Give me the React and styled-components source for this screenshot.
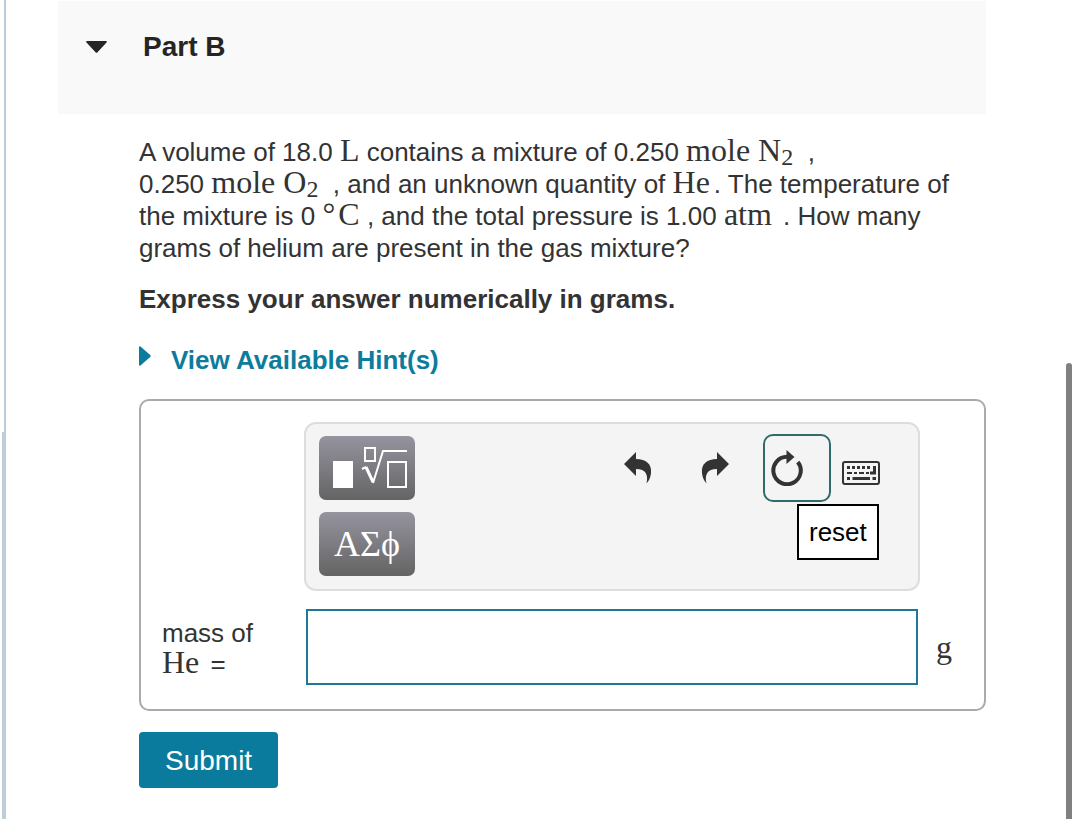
import React, { useState } from 'react'
import styled, { createGlobalStyle } from 'styled-components'

const GlobalStyle = createGlobalStyle`
  * {
    box-sizing: border-box;
  }
  body {
    margin: 0;
    background-color: #fff;
    color: #333;
    font-family: "Liberation Sans", Arial, sans-serif;
    font-size: 26px;
    line-height: 32px;
  }
  button, input {
    font: inherit;
    color: inherit;
  }
`

const Page = styled.div`
  display: flex;
  align-items: stretch;
  min-height: 100vh;
`
const Rail = styled.div`
  width: 6px;
  flex: none;
  display: flex;
  flex-direction: column;
  align-items: flex-end;
`
const RailTop = styled.div`
  width: 2px;
  height: 432px;
  background-color: #bccbdc;
`
const RailBottom = styled.div`
  width: 4px;
  flex: 1;
  background-color: #bfcdd6;
`
const Main = styled.main`
  flex: 1;
  min-width: 0;
  padding: 1px 80px 31px 52px;
`
const ScrollTrack = styled.div`
  width: 12px;
  flex: none;
  display: flex;
  padding: 363px 6px 0 0;
`
const ScrollThumb = styled.div`
  flex: 1;
  border-radius: 3px 3px 0 0;
  background-color: #808080;
`

const PartHeader = styled.header`
  height: 113px;
  padding: 30px 28px;
  background-color: #f9f9f9;
`
const PartToggle = styled.button`
  display: flex;
  align-items: center;
  gap: 36px;
  padding: 0;
  border: 0;
  background: none;
  color: #252525;
  font-size: 28px;
  font-weight: bold;
  cursor: pointer;
`
const Body = styled.div`
  padding: 22px 0 0 81px;
`
const Question = styled.p`
  margin: 0;
`
const Instruction = styled.p`
  margin: 19px 0 0;
  font-weight: bold;
`
const Roman = styled.span`
  margin-right: ${props => (props.$spaced ? 4 : 0)}px;
  font-family: "Liberation Serif", "Times New Roman", serif;
  font-size: 32px;
  line-height: 0;
`
const Sub = styled.sub`
  font-size: 24px;
  line-height: 0;
  vertical-align: -4px;
`
const Degree = styled.span`
  margin-right: 3px;
`
const NoWrap = styled.span`
  white-space: nowrap;
`
const Hints = styled.button`
  display: flex;
  align-items: center;
  gap: 20px;
  margin-top: 29px;
  padding: 0;
  border: 0;
  background: none;
  color: #0d7c9c;
  font-weight: bold;
  cursor: pointer;

  svg {
    margin-bottom: 8px;
  }
`

const AnswerBox = styled.section`
  display: grid;
  grid-template-columns: 143px minmax(0, 1fr) 45px;
  row-gap: 18px;
  margin-top: 23px;
  padding: 21px 19px 24px 21px;
  border: 2px solid #aaa;
  border-radius: 10px;
`
const Toolbar = styled.div`
  grid-column: 2;
  display: flex;
  align-items: flex-start;
  justify-content: space-between;
  height: 169px;
  margin-left: -1px;
  padding: 10px 36px 0 13px;
  border: 2px solid #ddd;
  border-radius: 12px;
  background-color: #f4f4f4;
`
const Palettes = styled.div`
  display: flex;
  flex-direction: column;
  gap: 12px;
  padding-top: 2px;
`
const PaletteButton = styled.button`
  display: flex;
  align-items: center;
  justify-content: center;
  width: 96px;
  height: 64px;
  padding: 0;
  border: 0;
  border-radius: 7px;
  background: linear-gradient(#95949f, #646464);
  color: #fff;
  font-family: "Liberation Serif", "Times New Roman", serif;
  font-size: 36px;
  cursor: pointer;
`
const Tools = styled.div`
  display: flex;
  align-items: center;
`
const ToolButton = styled.button`
  position: relative;
  display: flex;
  align-items: center;
  width: ${props => props.$width}px;
  height: 68px;
  padding: ${props => props.$drop || 0}px 0 0 ${props => props.$inset || 0}px;
  border: 2px solid ${props => (props.$active ? '#2f6b6b' : 'transparent')};
  border-radius: 10px;
  background: none;
  cursor: pointer;
`
const Tooltip = styled.span`
  position: absolute;
  top: 68px;
  left: 32px;
  padding: 10px;
  border: 2px solid #000;
  background-color: #fff;
  color: #000;
`
const AnswerLabel = styled.label`
  grid-column: 1;
  align-self: center;
  padding-top: 4px;
  line-height: 31px;
`
const AnswerField = styled.div`
  padding: 0 2px 0 1px;
`
const AnswerInput = styled.input`
  display: block;
  width: 100%;
  height: 76px;
  padding: 0 16px;
  border: 2px solid #1f7896;
  border-radius: 0;
  background-color: #fff;
  outline: none;
`
const Unit = styled.span`
  align-self: center;
  padding: 4px 0 0 16px;
`
const SubmitButton = styled.button`
  height: 56px;
  margin-top: 21px;
  padding: 1px 26px 0;
  border: 0;
  border-radius: 4px;
  background-color: #0b7b9d;
  color: #fff;
  font-size: 28px;
  cursor: pointer;
`

const CaretDown = () => (
  <svg width="21" height="12" viewBox="0 0 21 12" aria-hidden="true">
    <path d="M1 0H20Q21.500 .5 20.500 1.500L11.500 11.200Q10.500 12.300 9.500 11.200L.5 1.500Q-.5 .5 1 0Z" fill="#252525" />
  </svg>
)

const CaretRight = () => (
  <svg width="12" height="20" viewBox="0 0 12 20" aria-hidden="true">
    <path d="M0 1Q.4-.4 1.500.6L11.200 9Q12.200 10 11.200 11L1.500 19.400Q.4 20.400 0 19Z" fill="#0d7c9c" />
  </svg>
)

const TemplateIcon = () => (
  <svg width="96" height="64" viewBox="0 0 96 64" fill="none" stroke="#fff" aria-hidden="true">
    <rect x="14" y="25" width="20" height="27" fill="#fff" stroke="none" />
    <rect x="46" y="12" width="10" height="13" strokeWidth="2" />
    <path d="M43 33L47 31" strokeWidth="2" />
    <path d="M47 31L54 46" strokeWidth="3" />
    <path d="M54 47L64 15H88" strokeWidth="2" />
    <rect x="69" y="26" width="18" height="25" strokeWidth="2" />
  </svg>
)

const ArrowIcon = ({ flip }) => (
  <svg width="28" height="32" viewBox="0 0 28 32" aria-hidden="true">
    <path
      transform={flip ? 'translate(28 0) scale(-1 1)' : undefined}
      d="M0 12L12 0V7C22 7 28 12 27 21Q26.500 27 22.500 31.500C24.500 23 22 17 12 17V24Z"
      fill="#333"
    />
  </svg>
)

const ResetIcon = () => (
  <svg width="32" height="36" viewBox="0 0 32 36" aria-hidden="true">
    <path d="M16 6.800A13.700 13.700 0 1 0 26.800 12" fill="none" stroke="#333" strokeWidth="4" />
    <path d="M15.500 0L23.500 7L15.500 14Z" fill="#333" />
  </svg>
)

const KeyboardIcon = () => (
  <svg width="38" height="24" viewBox="0 0 38 24" fill="none" stroke="#333" aria-hidden="true">
    <rect x="1" y="1" width="36" height="22" rx="2" strokeWidth="2" />
    <path d="M5 6.500H29" strokeWidth="3" strokeDasharray="3 2" />
    <path d="M5 12H27" strokeWidth="2" strokeDasharray="5 2 3 2" />
    <path d="M32.500 5V13.500M28 12H34" strokeWidth="3" />
    <path d="M5 17.500H8M10.500 17.500H28M30.500 17.500H34" strokeWidth="3" />
  </svg>
)

export default function App() {
  const [answer, setAnswer] = useState('')

  return (
    <Page>
      <GlobalStyle />
      <Rail>
        <RailTop />
        <RailBottom />
      </Rail>
      <Main>
        <PartHeader>
          <PartToggle type="button" aria-expanded="true">
            <CaretDown />
            Part B
          </PartToggle>
        </PartHeader>
        <Body>
          <Question>
            A volume of 18.0 <Roman>L</Roman> contains a mixture of{' '}
            <NoWrap>0.250 <Roman>mole N<Sub>2</Sub></Roman>&nbsp; ,</NoWrap>{' '}
            <NoWrap>0.250 <Roman>mole O<Sub>2</Sub></Roman>&nbsp; ,</NoWrap>{' '}
            and an unknown quantity of <Roman $spaced>He</Roman>. The temperature of
            the mixture is <NoWrap>0 <Roman><Degree>°</Degree>C</Roman> ,</NoWrap>{' '}
            and the total pressure is <NoWrap>1.00 <Roman $spaced>atm</Roman> .</NoWrap>{' '}
            How many grams of helium are present in the gas mixture?
          </Question>
          <Instruction>Express your answer numerically in grams.</Instruction>
          <Hints type="button" aria-expanded="false">
            <CaretRight />
            View Available Hint(s)
          </Hints>

          <AnswerBox>
            <Toolbar role="toolbar">
              <Palettes>
                <PaletteButton type="button" aria-label="templates">
                  <TemplateIcon />
                </PaletteButton>
                <PaletteButton type="button">ΑΣϕ</PaletteButton>
              </Palettes>
              <Tools>
                <ToolButton type="button" aria-label="undo" $width={77}>
                  <ArrowIcon />
                </ToolButton>
                <ToolButton type="button" aria-label="redo" $width={64}>
                  <ArrowIcon flip />
                </ToolButton>
                <ToolButton type="button" $width={68} $inset={6} $active onClick={() => setAnswer('')}>
                  <ResetIcon />
                  <Tooltip role="tooltip">reset</Tooltip>
                </ToolButton>
                <ToolButton type="button" aria-label="keyboard" $width={51} $inset={9} $drop={10}>
                  <KeyboardIcon />
                </ToolButton>
              </Tools>
            </Toolbar>
            <AnswerLabel htmlFor="answer">
              mass of
              <br />
              <Roman $spaced>He</Roman> =
            </AnswerLabel>
            <AnswerField>
              <AnswerInput id="answer" type="text" value={answer} onChange={e => setAnswer(e.target.value)} />
            </AnswerField>
            <Unit>
              <Roman>g</Roman>
            </Unit>
          </AnswerBox>
          <SubmitButton type="button">Submit</SubmitButton>
        </Body>
      </Main>
      <ScrollTrack>
        <ScrollThumb />
      </ScrollTrack>
    </Page>
  )
}
